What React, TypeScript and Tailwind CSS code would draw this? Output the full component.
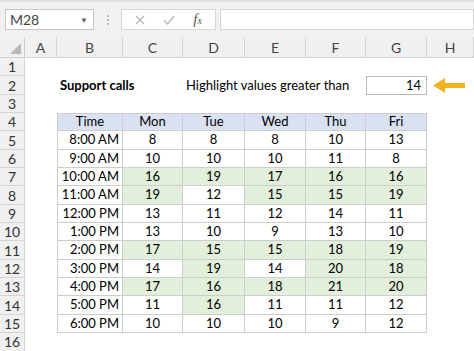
import React from "react";

const times = [
  "8:00 AM",
  "9:00 AM",
  "10:00 AM",
  "11:00 AM",
  "12:00 PM",
  "1:00 PM",
  "2:00 PM",
  "3:00 PM",
  "4:00 PM",
  "5:00 PM",
  "6:00 PM",
];

const calls = [
  [8, 8, 8, 10, 13],
  [10, 10, 10, 11, 8],
  [16, 19, 17, 16, 16],
  [19, 12, 15, 15, 19],
  [13, 11, 12, 14, 11],
  [13, 10, 9, 13, 10],
  [17, 15, 15, 18, 19],
  [14, 19, 14, 20, 18],
  [17, 16, 18, 21, 20],
  [11, 16, 11, 11, 12],
  [10, 10, 10, 9, 12],
];

const days = ["Mon", "Tue", "Wed", "Thu", "Fri"];
const letters = ["A", "B", "C", "D", "E", "F", "G", "H"];
const threshold = 14;

const gridCols =
  "grid grid-cols-[25px_32px_66px_60px_62px_61px_60px_61px_1fr]";

function RowNum({ n }: { n: number }) {
  return (
    <div className="h-[18.35px] flex items-center justify-center bg-[#f0f0f0] border-b border-r border-[#d4d4d4] text-[#333] text-[14px]">
      {n}
    </div>
  );
}

function Arrow() {
  return (
    <svg width="34" height="15" viewBox="0 0 34 15">
      <polygon points="0,7.5 12,0 12,5 32,5 32,10 12,10 12,15" fill="#f2b321" />
    </svg>
  );
}

export default function App() {
  const cell = "h-[18.35px] flex items-center";
  const tbl = "border-r border-b border-[#cdcdcd]";

  return (
    <div className="w-[474px] h-[351px] overflow-hidden bg-white font-['Lato',sans-serif] text-[13px] text-black">
      {/* toolbar */}
      <div className="h-[37px] bg-[#f1f1f1] border-t-2 border-[#dedede] flex items-start pt-[7px] pl-[5px]">
        <div className="w-[89px] h-[21px] bg-white border border-[#c6c6c6] flex items-center justify-between pl-[4px] pr-[5px] text-[#444] text-[14px]">
          <span>M28</span>
          <span className="text-[8px] text-[#666]">▼</span>
        </div>
        <div className="w-[27px] h-[21px] flex flex-col items-center justify-center gap-[2px]">
          <span className="w-[2px] h-[2px] bg-[#b9b9b9]" />
          <span className="w-[2px] h-[2px] bg-[#b9b9b9]" />
          <span className="w-[2px] h-[2px] bg-[#b9b9b9]" />
        </div>
        <div className="w-[95px] h-[21px] bg-white border border-[#d6d6d6] flex items-center justify-around px-[4px]">
          <svg width="10" height="10" viewBox="0 0 10 10">
            <path d="M1 1 L9 9 M9 1 L1 9" stroke="#b5b5b5" strokeWidth="1.2" />
          </svg>
          <svg width="12" height="10" viewBox="0 0 12 10">
            <path d="M1 5.5 L4.5 9 L11 1" stroke="#b5b5b5" strokeWidth="1.2" fill="none" />
          </svg>
          <span className="font-['Liberation_Serif',serif] italic text-[15px] text-[#555]">
            f<span className="text-[10px]">x</span>
          </span>
        </div>
        <div className="ml-[4px] flex-1 h-[21px] bg-white border border-[#d6d6d6]" />
      </div>

      {/* sheet */}
      <div className={gridCols}>
        {/* column headers */}
        <div className="h-[21px] bg-[#f0f0f0] border-r border-b border-[#cfcfcf] flex items-end justify-end p-[3px]">
          <svg width="11" height="11" viewBox="0 0 11 11">
            <polygon points="11,0 11,11 0,11" fill="#b8b8b8" />
          </svg>
        </div>
        {letters.map((l) => (
          <div
            key={l}
            className="h-[21px] bg-[#f0f0f0] border-r border-b border-[#d4d4d4] flex items-center justify-center text-[#444] text-[14px]"
          >
            {l}
          </div>
        ))}

        {/* row 1 */}
        <RowNum n={1} />
        <div className={`${cell} col-span-8`} />

        {/* row 2 */}
        <RowNum n={2} />
        <div className={cell} />
        <div className={`${cell} pl-[3px] font-bold whitespace-nowrap`}>Support calls</div>
        <div className={cell} />
        <div className={`${cell} pl-[3px] whitespace-nowrap overflow-visible`}>
          Highlight values greater than
        </div>
        <div className={cell} />
        <div className={cell} />
        <div className={`${cell} justify-end pr-[5px] border border-[#b9b9b9]`}>14</div>
        <div className={`${cell} pl-[6px]`}>
          <Arrow />
        </div>

        {/* row 3 */}
        <RowNum n={3} />
        <div className={`${cell} col-span-8`} />

        {/* row 4 header */}
        <RowNum n={4} />
        <div className={cell} />
        <div className={`${cell} justify-center bg-[#d9e1f2] border-t border-l ${tbl}`}>Time</div>
        {days.map((d) => (
          <div key={d} className={`${cell} justify-center bg-[#d9e1f2] border-t ${tbl}`}>
            {d}
          </div>
        ))}
        <div className={cell} />

        {/* data rows */}
        {times.map((t, i) => (
          <React.Fragment key={t}>
            <RowNum n={i + 5} />
            <div className={cell} />
            <div className={`${cell} justify-end pr-[3px] border-l ${tbl}`}>{t}</div>
            {calls[i].map((v, j) => (
              <div
                key={j}
                className={`${cell} justify-center ${tbl} ${v > threshold ? "bg-[#e2efda]" : "bg-white"}`}
              >
                {v}
              </div>
            ))}
            <div className={cell} />
          </React.Fragment>
        ))}

        {/* row 16 */}
        <RowNum n={16} />
        <div className={`${cell} col-span-8`} />
      </div>
    </div>
  );
}
